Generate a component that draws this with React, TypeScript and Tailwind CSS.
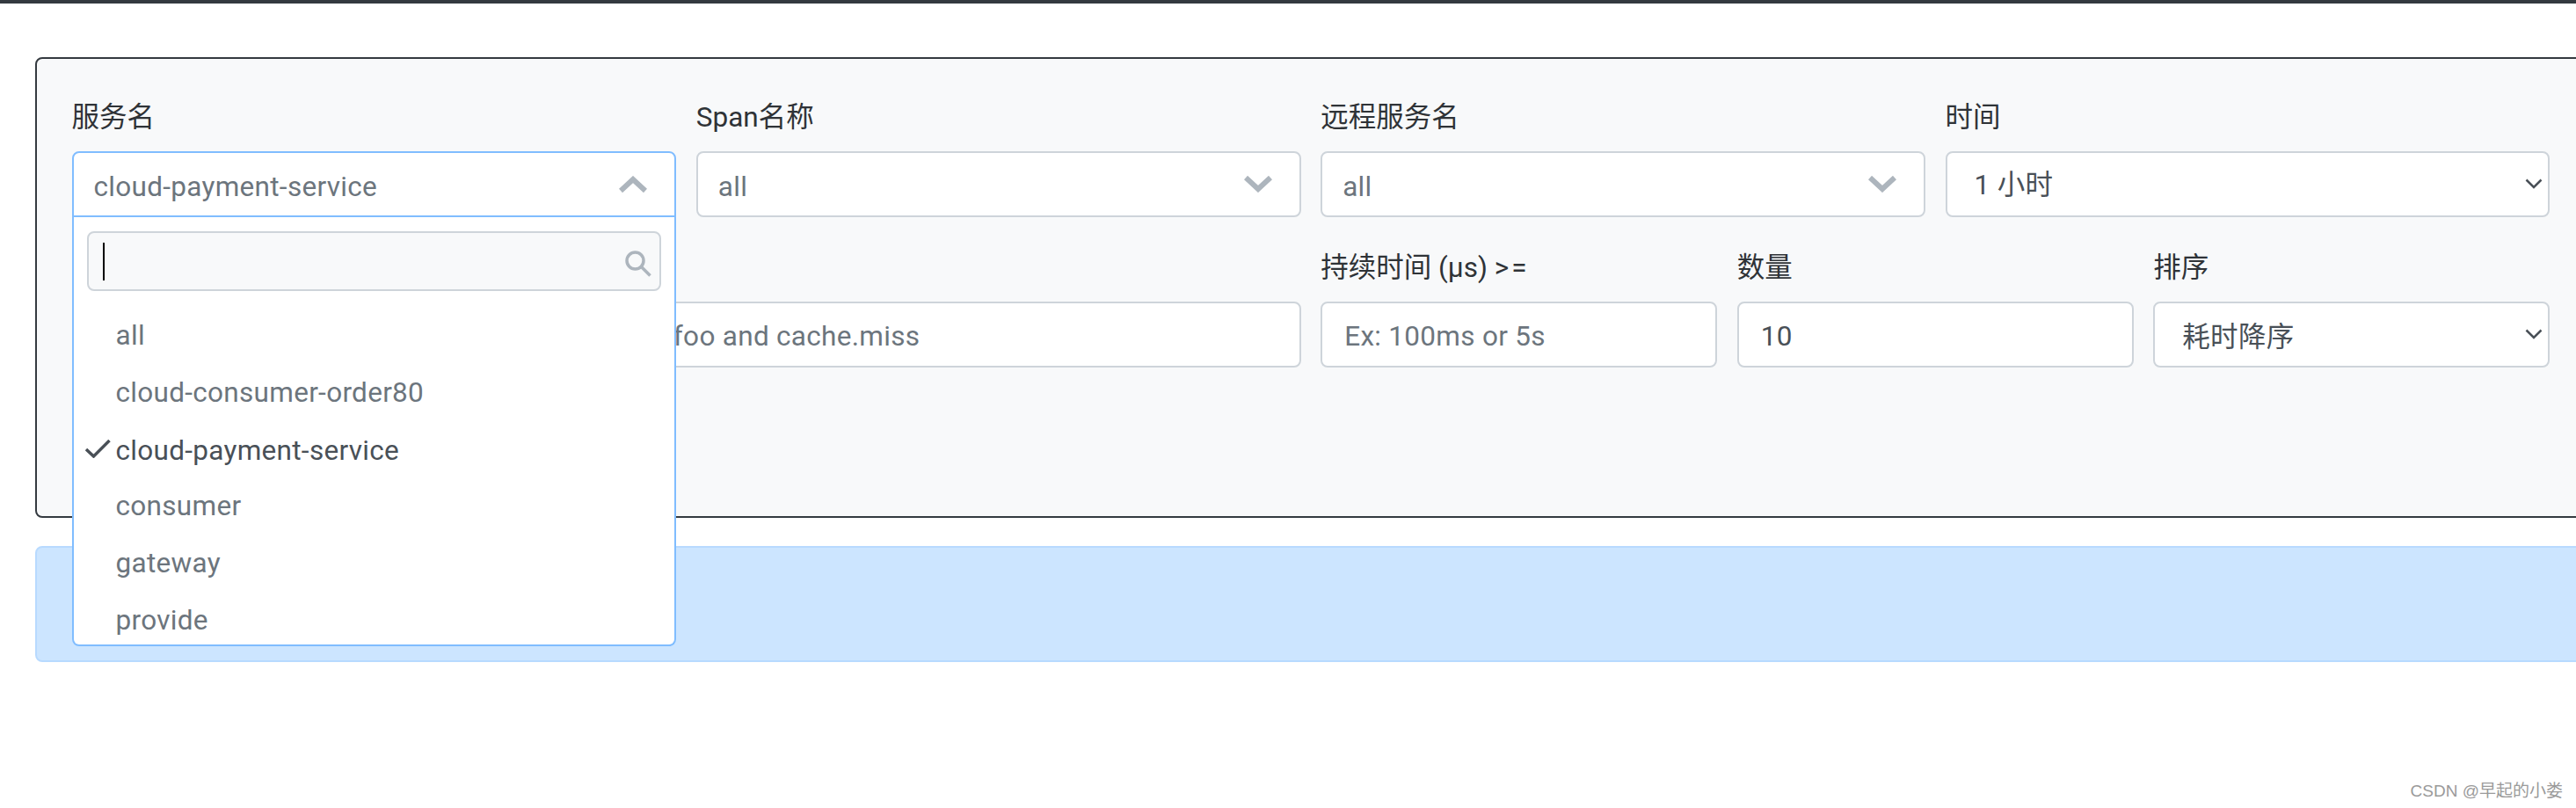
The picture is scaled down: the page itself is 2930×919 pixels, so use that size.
import React from 'react';

const labelCls = 'block text-[31.5px] leading-[47px] mb-[15px] text-[#2f3337]';
const fieldCls =
  'block w-full h-[75px] bg-white border-2 border-[#ced4da] rounded-[8px] text-[31.5px] tracking-[0.3px] outline-none';

const Chevron: React.FC<{ up?: boolean }> = ({ up }) => (
  <svg width="32" height="19" viewBox="0 0 32 19" fill="none" className="shrink-0">
    <path
      d={up ? 'M2 17 L16 4 L30 17' : 'M2 2 L16 15 L30 2'}
      stroke="#adb5bd"
      strokeWidth="6"
    />
  </svg>
);

// select box in its closed state (all / cloud-payment-service)
const ChosenBox: React.FC<{ value: string }> = ({ value }) => (
  <div className="flex items-center justify-between h-[75px] bg-white border-2 border-[#ced4da] rounded-[8px] pl-[23px] pr-[31px] text-[31.5px] tracking-[0.3px] text-[#6c757d]">
    <span className="pt-[7px]">{value}</span>
    <Chevron />
  </div>
);

const NativeSelect: React.FC<{ value: string; padding: string }> = ({ value, padding }) => (
  <div className="relative">
    <select className={`${fieldCls} appearance-none text-[#495057] ${padding}`} defaultValue={value}>
      <option>{value}</option>
    </select>
    <svg width="20" height="12" viewBox="0 0 20 12" fill="none" className="absolute right-[8px] top-[31px] pointer-events-none">
      <path d="M1.5 1.5 L10 10 L18.5 1.5" stroke="#495057" strokeWidth="2.5" />
    </svg>
  </div>
);

const options = [
  'all',
  'cloud-consumer-order80',
  'cloud-payment-service',
  'consumer',
  'gateway',
  'provide',
];

const ServiceDropdown: React.FC = () => (
  <div className="relative z-10">
    <div className="flex items-center justify-between h-[75px] bg-white border-2 border-[#80bdff] rounded-t-[8px] pl-[23px] pr-[31px] text-[31.5px] tracking-[0.3px] text-[#6c757d]">
      <span className="pt-[7px]">cloud-payment-service</span>
      <Chevron up />
    </div>
    <div className="absolute top-full left-0 right-0 h-[488px] overflow-hidden bg-white border-x-2 border-b-2 border-[#80bdff] rounded-b-[8px] pt-[16px]">
      <div className="relative mx-[15.5px]">
        <div className="flex items-center h-[68px] bg-[#f8f9fa] border-2 border-[#ced4da] rounded-[8px] pl-[16px]">
          <span className="block w-[2px] h-[43px] bg-black" />
        </div>
        <svg width="30" height="30" viewBox="0 0 30 30" fill="none" className="absolute right-[11px] top-[22px]">
          <circle cx="11.5" cy="11.5" r="9.5" stroke="#adb5bd" strokeWidth="3.5" />
          <path d="M18.5 18.5 L28.5 28.5" stroke="#adb5bd" strokeWidth="3.5" />
        </svg>
      </div>
      <ul className="mt-[18px]">
        {options.map(name => {
          const selected = name === 'cloud-payment-service';
          return (
            <li
              key={name}
              className={`flex items-center h-[64.8px] pl-[13px] text-[31.5px] tracking-[0.3px] ${selected ? 'text-[#495057]' : 'text-[#6c757d]'}`}
            >
              <span className="flex w-[35px] shrink-0">
                {selected && (
                  <svg width="29" height="21" viewBox="0 0 29 21" fill="none">
                    <path d="M1 11 L9.5 19 L27.5 1" stroke="#495057" strokeWidth="3.5" />
                  </svg>
                )}
              </span>
              <span className={selected ? 'pt-[3px]' : ''}>{name}</span>
            </li>
          );
        })}
      </ul>
    </div>
  </div>
);

export default function App() {
  return (
    <div className="relative h-screen w-full overflow-hidden bg-white border-t-4 border-[#343a40] font-['Roboto','Noto_Sans_CJK_SC',sans-serif]">
      <div className="w-[2903px] ml-[39.5px] mt-[61px]">
        <div className="h-[524px] bg-[#f8f9fa] border-2 border-[#343a40] rounded-l-[8px] pl-[40px] pr-[40px] pt-[43px]">
          <div className="grid grid-cols-12 gap-x-[22.4px] gap-y-[34px]">
            <div className="col-span-3">
              <label className={labelCls}>服务名</label>
              <ServiceDropdown />
            </div>
            <div className="col-span-3">
              <label className={labelCls}>Span名称</label>
              <ChosenBox value="all" />
            </div>
            <div className="col-span-3">
              <label className={labelCls}>远程服务名</label>
              <ChosenBox value="all" />
            </div>
            <div className="col-span-3">
              <label className={labelCls}>时间</label>
              <NativeSelect value="1 小时" padding="pl-[31px] pt-[3px]" />
            </div>

            <div className="col-span-6">
              <label className={labelCls}>注解查询</label>
              <input
                className={`${fieldCls} pl-[25px] pt-[3px] placeholder:text-[#6c757d]`}
                placeholder="For example: http.path=/foo/bar/ and cluster=foo and cache.miss"
              />
            </div>
            <div className="col-span-2">
              <label className={labelCls}>
                持续时间 (μs) <span className="tracking-[3px]">&gt;=</span>
              </label>
              <input className={`${fieldCls} pl-[25px] pt-[3px] placeholder:text-[#6c757d]`} placeholder="Ex: 100ms or 5s" />
            </div>
            <div className="col-span-2">
              <label className={labelCls}>数量</label>
              <input className={`${fieldCls} pl-[25px] pt-[3px] text-[#495057]`} defaultValue="10" />
            </div>
            <div className="col-span-2">
              <label className={labelCls}>排序</label>
              <NativeSelect value="耗时降序" padding="pl-[31px] pt-[6px]" />
            </div>
          </div>
        </div>
        <div className="h-[132px] mt-[32px] bg-[#cce5ff] border-2 border-[#b8daff] rounded-l-[8px]" />
      </div>
      <div className="absolute right-[15px] bottom-[6px] text-[19px] leading-[26px] text-[#9a9a9a] font-['Liberation_Sans','Noto_Sans_CJK_SC',sans-serif]">
        CSDN @早起的小娄
      </div>
    </div>
  );
}
